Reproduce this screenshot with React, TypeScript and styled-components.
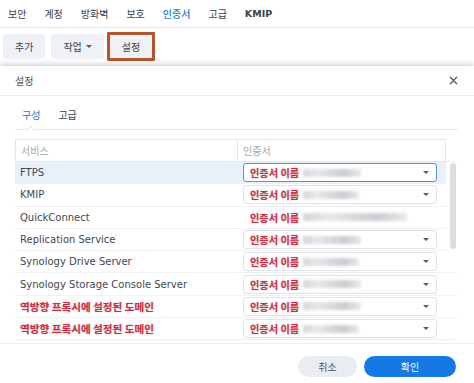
import React from 'react';
import styled, { createGlobalStyle, css } from 'styled-components';

const GlobalStyle = createGlobalStyle`
  html, body {
    margin: 0;
    padding: 0;
    background: #ffffff;
  }
  body {
    font-family: 'DejaVu Sans', 'Noto Sans CJK KR', sans-serif;
    font-size: 10px;
    color: #333c47;
    overflow: hidden;
  }
`;

const Page = styled.div`
  width: 474px;
  height: 383px;
  display: flex;
  flex-direction: column;
  overflow: hidden;
`;

const MainTabs = styled.div`
  height: 27px;
  display: flex;
  align-items: center;
  border-bottom: 1px solid #e6e9ed;
  font-family: 'Noto Sans CJK KR', sans-serif;
`;

const MainTab = styled.div<{ $active?: boolean }>`
  padding: 0 9px 0 8px;
  margin-right: 1px;
  font-size: 10px;
  color: ${(p) => (p.$active ? '#1877d6' : '#39414b')};
  font-weight: ${(p) => (p.$active ? 500 : 400)};
  &.latin {
    font-family: 'DejaVu Sans', sans-serif;
    font-weight: bold;
    font-size: 9.5px;
  }
`;

const Toolbar = styled.div`
  height: 36px;
  display: flex;
  align-items: center;
  gap: 6px;
  padding-left: 3px;
`;

const ToolButton = styled.div<{ $marked?: boolean }>`
  height: 25px;
  padding: 0 12px;
  display: flex;
  align-items: center;
  gap: 4px;
  background: #eef1f5;
  border-radius: 3px;
  font-family: 'Noto Sans CJK KR', sans-serif;
  font-size: 10px;
  color: #39414b;
  box-sizing: border-box;
  ${(p) =>
    p.$marked &&
    css`
      height: 29px;
      padding: 0 12px;
      border: 3px solid #b4562a;
      border-radius: 1px;
      margin-left: -3px;
    `}
`;

const Caret = styled.span`
  width: 0;
  height: 0;
  border-left: 3px solid transparent;
  border-right: 3px solid transparent;
  border-top: 3px solid #555c66;
`;

const Dialog = styled.div`
  flex: 1;
  margin-top: 2px;
  background: #fff;
  box-shadow: 0 -2px 5px rgba(0, 0, 0, 0.18);
  display: flex;
  flex-direction: column;
`;

const DialogHeader = styled.div`
  height: 29px;
  display: flex;
  align-items: center;
  justify-content: space-between;
  padding: 0 16px 0 15px;
  border-bottom: 1px solid #e8ebef;
  font-family: 'Noto Sans CJK KR', sans-serif;
  font-size: 10px;
  color: #4a525c;
`;

const CloseIcon = styled.svg`
  width: 9px;
  height: 9px;
`;

const Body = styled.div`
  padding: 0 16px 0 15px;
`;

const SubTabs = styled.div`
  height: 34px;
  padding-top: 3px;
  box-sizing: border-box;
  display: flex;
  align-items: center;
  border-bottom: 1px solid #e6e9ed;
  font-family: 'Noto Sans CJK KR', sans-serif;
`;

const SubTab = styled.div<{ $active?: boolean }>`
  position: relative;
  padding: 0 9px 0 7px;
  margin-right: 2px;
  font-size: 10px;
  color: ${(p) => (p.$active ? '#1877d6' : '#39414b')};
  ${(p) =>
    p.$active &&
    css`
      &::after {
        content: '';
        position: absolute;
        left: 13px;
        bottom: -11px;
        width: 5px;
        height: 5px;
        background: #fff;
        border-left: 1px solid #e6e9ed;
        border-top: 1px solid #e6e9ed;
        transform: rotate(45deg);
      }
    `}
`;

const Grid = styled.div`
  margin-top: 9px;
  display: grid;
  grid-template-columns: 222px 209px 12px;
`;

const HeadCell = styled.div<{ $last?: boolean }>`
  height: 21px;
  display: flex;
  align-items: center;
  padding-left: 5px;
  border-top: 1px solid #e3e6ea;
  border-bottom: 1px solid #e3e6ea;
  border-left: 1px solid #e3e6ea;
  ${(p) => p.$last && 'border-right: 1px solid #e3e6ea;'}
  font-family: 'Noto Sans CJK KR', sans-serif;
  font-size: 10px;
  color: #a0a6ad;
`;

const Gutter = styled.div`
  border-bottom: 1px solid #f0f2f4;
`;

const Cell = styled.div<{ $selected?: boolean }>`
  height: 21.3px;
  display: flex;
  align-items: center;
  padding-left: 5px;
  border-bottom: 1px solid #eef0f3;
  background: ${(p) => (p.$selected ? '#e7f0fb' : '#fff')};
  font-size: 10px;
  color: #3f4751;
  white-space: nowrap;
  overflow: hidden;
`;

const WarnText = styled.span<{ $wide?: boolean }>`
  font-family: 'Noto Sans CJK KR', sans-serif;
  font-weight: bold;
  font-size: ${(p) => (p.$wide ? '10.6px' : '10.2px')};
  color: #d22b3d;
  text-shadow: 0 0 2px rgba(120, 120, 120, 0.45);
`;

const SelectBox = styled.div<{ $focused?: boolean; $plain?: boolean }>`
  width: 194px;
  height: 19px;
  box-sizing: border-box;
  display: flex;
  align-items: center;
  padding: 0 7px 0 6px;
  margin-left: 1px;
  border: 1px solid ${(p) => (p.$plain ? 'transparent' : p.$focused ? '#4f93dc' : '#dfe3e8')};
  border-radius: 3px;
  background: ${(p) => (p.$plain ? 'transparent' : '#fff')};
`;

const Blur = styled.span`
  height: 8px;
  margin-left: 4px;
  background: linear-gradient(90deg, #d3d6da 0%, #e6e8ea 25%, #d6d9dc 50%, #c9ccd0 72%, #e8eaec 100%);
  filter: blur(1.6px);
  flex: none;
`;

const Arrow = styled.span`
  margin-left: auto;
  width: 0;
  height: 0;
  border-left: 3px solid transparent;
  border-right: 3px solid transparent;
  border-top: 3px solid #555c66;
`;

const ScrollTrack = styled.div`
  grid-column: 3;
  grid-row: 2 / span 4;
  display: flex;
  justify-content: center;
  padding: 1px 1px 0 2px;
`;

const Thumb = styled.div`
  width: 6px;
  height: 86px;
  border-radius: 3px;
  background: #dadee3;
`;

const Footer = styled.div`
  margin-top: 3px;
  border-top: 1px solid #eceef1;
  display: flex;
  justify-content: flex-end;
  align-items: center;
  gap: 7px;
  padding: 12px 18px 0 0;
`;

const PillButton = styled.div<{ $primary?: boolean }>`
  height: 21px;
  width: ${(p) => (p.$primary ? '92px' : '59px')};
  border-radius: 11px;
  display: flex;
  align-items: center;
  justify-content: center;
  font-family: 'Noto Sans CJK KR', sans-serif;
  font-size: 10px;
  background: ${(p) => (p.$primary ? '#1479e4' : '#e9edf2')};
  color: ${(p) => (p.$primary ? '#fff' : '#4a525c')};
`;

type Row = {
  service: string;
  warn?: boolean;
  blur: number;
  plain?: boolean;
};

const rows: Row[] = [
  { service: 'FTPS', blur: 58 },
  { service: 'KMIP', blur: 56 },
  { service: 'QuickConnect', blur: 104, plain: true },
  { service: 'Replication Service', blur: 58 },
  { service: 'Synology Drive Server', blur: 56 },
  { service: 'Synology Storage Console Server', blur: 58 },
  { service: '역방향 프록시에 설정된 도메인', warn: true, blur: 58 },
  { service: '역방향 프록시에 설정된 도메인', warn: true, blur: 56 },
];

const mainTabs = ['보안', '계정', '방화벽', '보호', '인증서', '고급'];

const App = () => {
  return (
    <Page>
      <GlobalStyle />
      <MainTabs>
        {mainTabs.map((t) => (
          <MainTab key={t} $active={t === '인증서'}>
            {t}
          </MainTab>
        ))}
        <MainTab className='latin'>KMIP</MainTab>
      </MainTabs>
      <Toolbar>
        <ToolButton>추가</ToolButton>
        <ToolButton>
          작업<Caret />
        </ToolButton>
        <ToolButton $marked>설정</ToolButton>
      </Toolbar>
      <Dialog>
        <DialogHeader>
          <span>설정</span>
          <CloseIcon viewBox='0 0 10 10'>
            <path d='M1.5 1.5 L8.5 8.5 M8.5 1.5 L1.5 8.5' stroke='#5d646d' strokeWidth='1.6' strokeLinecap='round' />
          </CloseIcon>
        </DialogHeader>
        <Body>
          <SubTabs>
            <SubTab $active>구성</SubTab>
            <SubTab>고급</SubTab>
          </SubTabs>
          <Grid>
            <HeadCell>서비스</HeadCell>
            <HeadCell $last>인증서</HeadCell>
            <Gutter />
            {rows.map((r, i) => (
              <React.Fragment key={i}>
                <Cell $selected={i === 0}>{r.warn ? <WarnText $wide>{r.service}</WarnText> : r.service}</Cell>
                <Cell $selected={i === 0}>
                  <SelectBox $focused={i === 0} $plain={r.plain}>
                    <WarnText>인증서 이름</WarnText>
                    <Blur style={{ width: r.blur }} />
                    {!r.plain && <Arrow />}
                  </SelectBox>
                </Cell>
                {i >= 4 && <Gutter />}
              </React.Fragment>
            ))}
            <ScrollTrack>
              <Thumb />
            </ScrollTrack>
          </Grid>
        </Body>
        <Footer>
          <PillButton>취소</PillButton>
          <PillButton $primary>확인</PillButton>
        </Footer>
      </Dialog>
    </Page>
  );
};

export default App;
